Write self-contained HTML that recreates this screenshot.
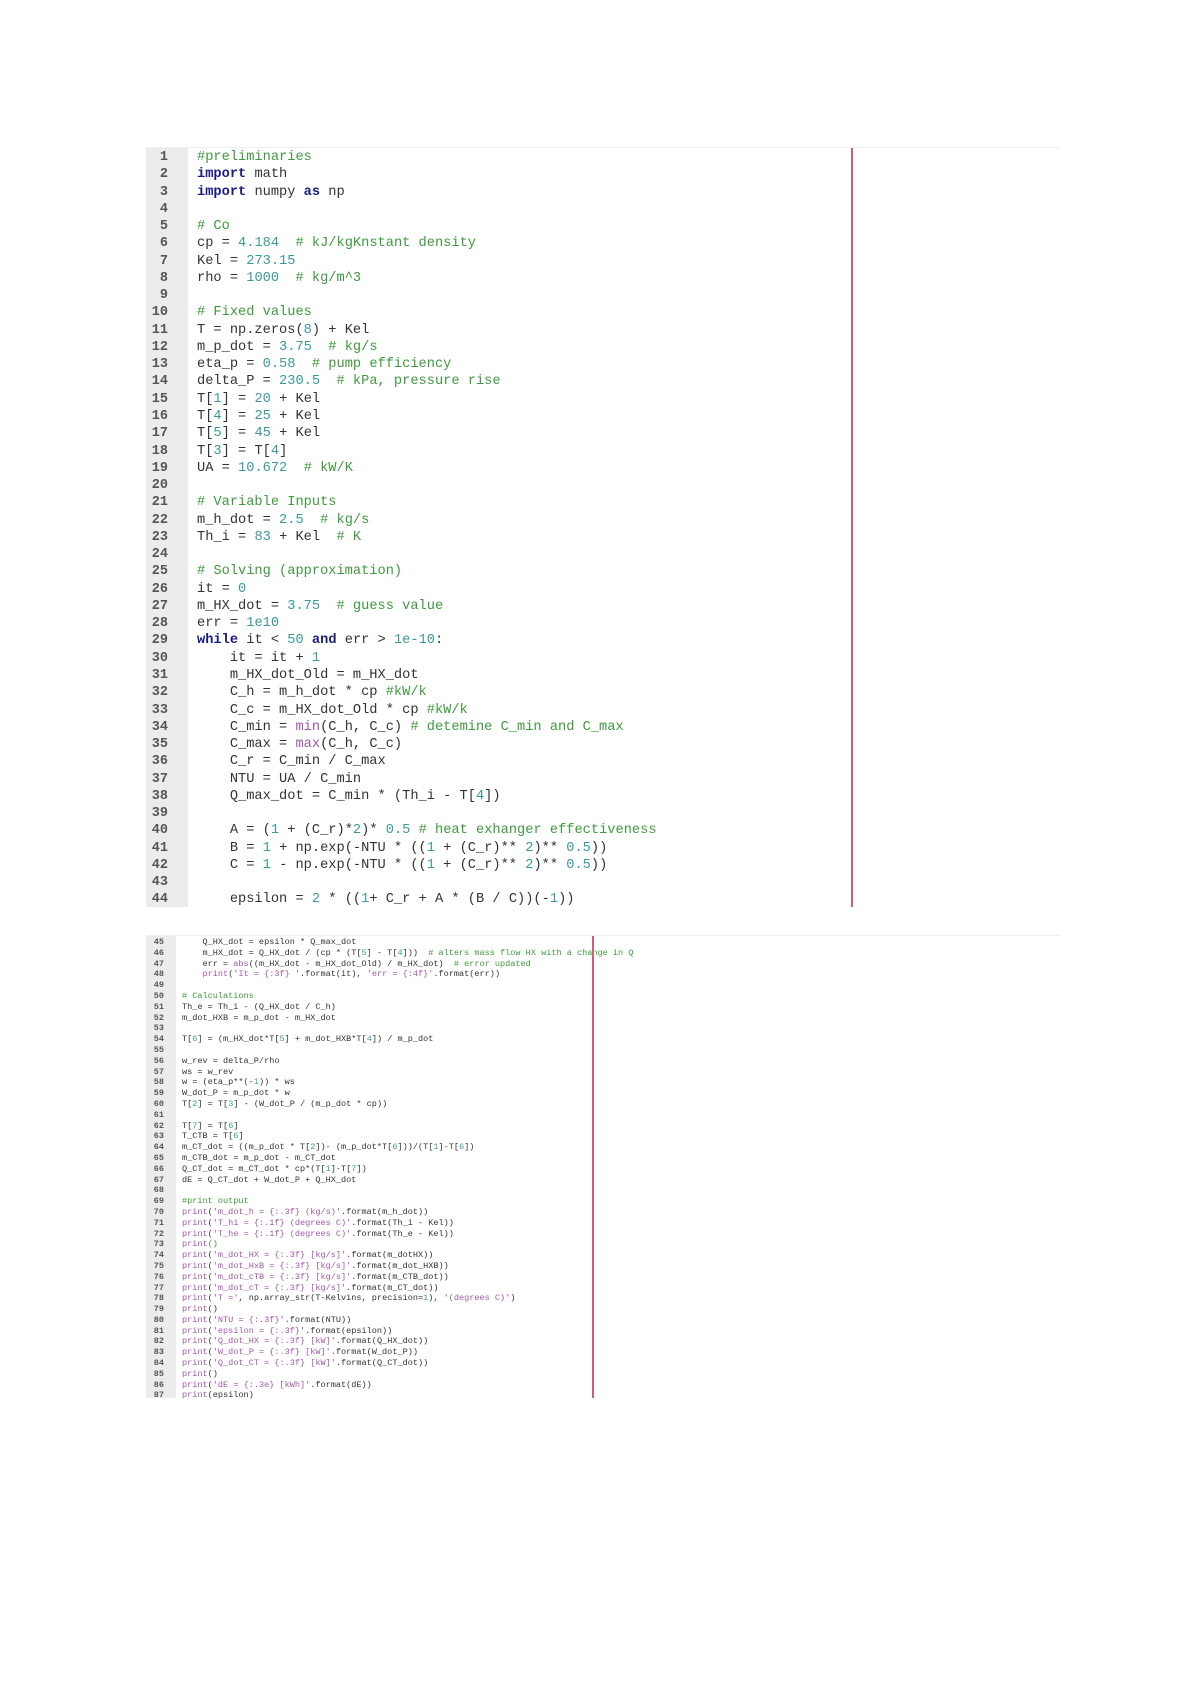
<!DOCTYPE html>
<html><head><meta charset="utf-8"><style>
body{margin:0;background:#fff;width:1200px;height:1696px;position:relative;overflow:hidden}
.blk{position:absolute;left:146px;background:#fff;border-top:1px solid #f0f0f0}
.gut{position:absolute;left:0;top:0;bottom:0;background:#ececec}
pre{margin:0;font-family:"Liberation Mono",monospace;color:#333;position:absolute;white-space:pre}
.ln{color:#555;text-align:right;font-weight:bold}
.k{color:#1c1c80;font-weight:bold}.n{color:#3a9a9a}.c{color:#3f9a3f}.b{color:#a05aa8}.s{color:#a05aa8}
.red{position:absolute;width:1.5px;background:#d06070}
</style></head><body>
<div class="blk" style="top:147px;width:914px;height:759px">
<div class="gut" style="width:42px"></div>
<pre class="ln" style="left:0;width:22px;top:1px;font-size:13.5px;line-height:17.26px">1
2
3
4
5
6
7
8
9
10
11
12
13
14
15
16
17
18
19
20
21
22
23
24
25
26
27
28
29
30
31
32
33
34
35
36
37
38
39
40
41
42
43
44</pre>
<pre style="left:51px;top:1px;font-size:13.68px;line-height:17.26px"><span class="c">#preliminaries</span>
<span class="k">import</span> math
<span class="k">import</span> numpy <span class="k">as</span> np

<span class="c"># Co</span>
cp = <span class="n">4.184</span>  <span class="c"># kJ/kgKnstant density</span>
Kel = <span class="n">273.15</span>
rho = <span class="n">1000</span>  <span class="c"># kg/m^3</span>

<span class="c"># Fixed values</span>
T = np.zeros(<span class="n">8</span>) + Kel
m_p_dot = <span class="n">3.75</span>  <span class="c"># kg/s</span>
eta_p = <span class="n">0.58</span>  <span class="c"># pump efficiency</span>
delta_P = <span class="n">230.5</span>  <span class="c"># kPa, pressure rise</span>
T[<span class="n">1</span>] = <span class="n">20</span> + Kel
T[<span class="n">4</span>] = <span class="n">25</span> + Kel
T[<span class="n">5</span>] = <span class="n">45</span> + Kel
T[<span class="n">3</span>] = T[<span class="n">4</span>]
UA = <span class="n">10.672</span>  <span class="c"># kW/K</span>

<span class="c"># Variable Inputs</span>
m_h_dot = <span class="n">2.5</span>  <span class="c"># kg/s</span>
Th_i = <span class="n">83</span> + Kel  <span class="c"># K</span>

<span class="c"># Solving (approximation)</span>
it = <span class="n">0</span>
m_HX_dot = <span class="n">3.75</span>  <span class="c"># guess value</span>
err = <span class="n">1e10</span>
<span class="k">while</span> it &lt; <span class="n">50</span> <span class="k">and</span> err &gt; <span class="n">1e-10</span>:
    it = it + <span class="n">1</span>
    m_HX_dot_Old = m_HX_dot
    C_h = m_h_dot * cp <span class="c">#kW/k</span>
    C_c = m_HX_dot_Old * cp <span class="c">#kW/k</span>
    C_min = <span class="b">min</span>(C_h, C_c) <span class="c"># detemine C_min and C_max</span>
    C_max = <span class="b">max</span>(C_h, C_c)
    C_r = C_min / C_max
    NTU = UA / C_min
    Q_max_dot = C_min * (Th_i - T[<span class="n">4</span>])

    A = (<span class="n">1</span> + (C_r)*<span class="n">2</span>)* <span class="n">0.5</span> <span class="c"># heat exhanger effectiveness</span>
    B = <span class="n">1</span> + np.exp(-NTU * ((<span class="n">1</span> + (C_r)** <span class="n">2</span>)** <span class="n">0.5</span>))
    C = <span class="n">1</span> - np.exp(-NTU * ((<span class="n">1</span> + (C_r)** <span class="n">2</span>)** <span class="n">0.5</span>))

    epsilon = <span class="n">2</span> * ((<span class="n">1</span>+ C_r + A * (B / C))(-<span class="n">1</span>))</pre>
<div class="red" style="left:705px;top:0;height:759px"></div>
</div>

<div class="blk" style="top:935px;width:914px;height:462px">
<div class="gut" style="width:30px"></div>
<pre class="ln" style="left:0;width:18px;top:1px;font-size:8.5px;line-height:10.79px">45
46
47
48
49
50
51
52
53
54
55
56
57
58
59
60
61
62
63
64
65
66
67
68
69
70
71
72
73
74
75
76
77
78
79
80
81
82
83
84
85
86
87</pre>
<pre style="left:36px;top:1px;font-size:8.55px;line-height:10.79px">    Q_HX_dot = epsilon * Q_max_dot
    m_HX_dot = Q_HX_dot / (cp * (T[<span class="n">5</span>] - T[<span class="n">4</span>]))  <span class="c"># alters mass flow HX with a change in Q</span>
    err = <span class="b">abs</span>((m_HX_dot - m_HX_dot_Old) / m_HX_dot)  <span class="c"># error updated</span>
    <span class="b">print</span>(<span class="s">'It = {:3f} '</span>.format(it), <span class="s">'err = {:4f}'</span>.format(err))

<span class="c"># Calculations</span>
Th_e = Th_i - (Q_HX_dot / C_h)
m_dot_HXB = m_p_dot - m_HX_dot

T[<span class="n">6</span>] = (m_HX_dot*T[<span class="n">5</span>] + m_dot_HXB*T[<span class="n">4</span>]) / m_p_dot

w_rev = delta_P/rho
ws = w_rev
w = (eta_p**(-<span class="n">1</span>)) * ws
W_dot_P = m_p_dot * w
T[<span class="n">2</span>] = T[<span class="n">3</span>] - (W_dot_P / (m_p_dot * cp))

T[<span class="n">7</span>] = T[<span class="n">6</span>]
T_CTB = T[<span class="n">6</span>]
m_CT_dot = ((m_p_dot * T[<span class="n">2</span>])- (m_p_dot*T[<span class="n">6</span>]))/(T[<span class="n">1</span>]-T[<span class="n">6</span>])
m_CTB_dot = m_p_dot - m_CT_dot
Q_CT_dot = m_CT_dot * cp*(T[<span class="n">1</span>]-T[<span class="n">7</span>])
dE = Q_CT_dot + W_dot_P + Q_HX_dot

<span class="c">#print output</span>
<span class="b">print</span>(<span class="s">'m_dot_h = {:.3f} (kg/s)'</span>.format(m_h_dot))
<span class="b">print</span>(<span class="s">'T_hi = {:.1f} (degrees C)'</span>.format(Th_i - Kel))
<span class="b">print</span>(<span class="s">'T_he = {:.1f} (degrees C)'</span>.format(Th_e - Kel))
<span class="b">print</span><span class="c">()</span>
<span class="b">print</span>(<span class="s">'m_dot_HX = {:.3f} [kg/s]'</span>.format(m_dotHX))
<span class="b">print</span>(<span class="s">'m_dot_HxB = {:.3f} [kg/s]'</span>.format(m_dot_HXB))
<span class="b">print</span>(<span class="s">'m_dot_cTB = {:.3f} [kg/s]'</span>.format(m_CTB_dot))
<span class="b">print</span>(<span class="s">'m_dot_cT = {:.3f} [kg/s]'</span>.format(m_CT_dot))
<span class="b">print</span>(<span class="s">'T ='</span>, np.array_str(T-Kelvins, precision=<span class="n">1</span>), <span class="s">'(degrees C)'</span>)
<span class="b">print</span>()
<span class="b">print</span>(<span class="s">'NTU = {:.3f}'</span>.format(NTU))
<span class="b">print</span>(<span class="s">'epsilon = {:.3f}'</span>.format(epsilon))
<span class="b">print</span>(<span class="s">'Q_dot_HX = {:.3f} [kW]'</span>.format(Q_HX_dot))
<span class="b">print</span>(<span class="s">'W_dot_P = {:.3f} [kW]'</span>.format(W_dot_P))
<span class="b">print</span>(<span class="s">'Q_dot_CT = {:.3f} [kW]'</span>.format(Q_CT_dot))
<span class="b">print</span>()
<span class="b">print</span>(<span class="s">'dE = {:.3e} [kWh]'</span>.format(dE))
<span class="b">print</span>(epsilon)</pre>
<div class="red" style="left:446px;top:0;height:462px"></div>
</div>
</body></html>
